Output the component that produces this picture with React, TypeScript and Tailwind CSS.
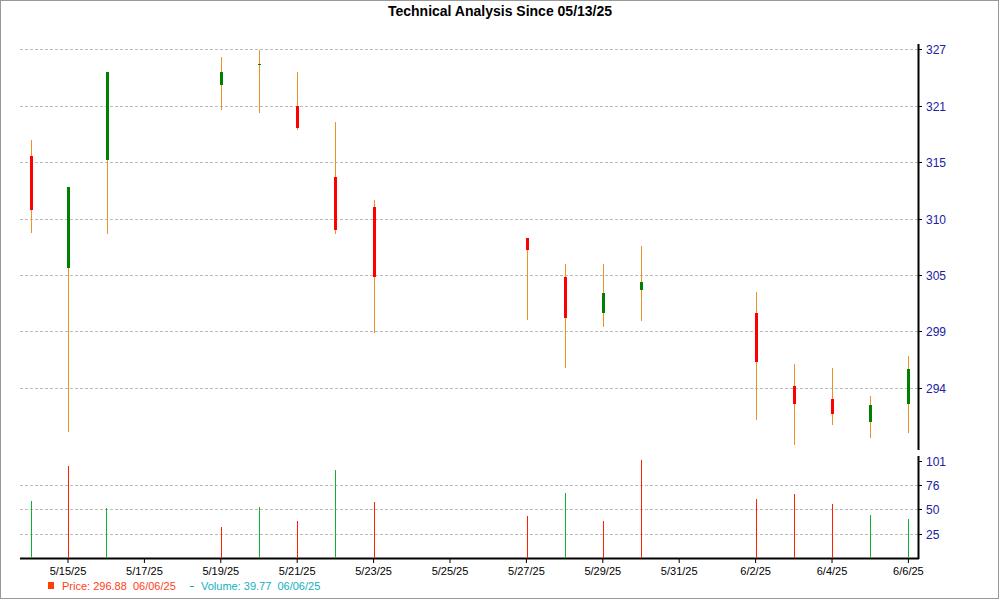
import React from "react";

const candles: [number, number, number, number, number, "g" | "r"][] = [
  [31, 140, 233, 156, 210, "r"],
  [68, 187, 432, 187, 268, "g"],
  [107, 72, 234, 72, 160, "g"],
  [221, 57, 110, 72, 85, "g"],
  [259, 50, 113, 64, 65, "g"],
  [297, 72, 130, 106, 128, "r"],
  [335, 122, 234, 177, 230, "r"],
  [374, 200, 333, 207, 277, "r"],
  [527, 238, 320, 238, 250, "r"],
  [565, 264, 368, 277, 318, "r"],
  [603, 264, 327, 293, 313, "g"],
  [641, 246, 321, 282, 290, "g"],
  [756, 292, 420, 313, 362, "r"],
  [794, 364, 445, 386, 404, "r"],
  [832, 368, 425, 399, 414, "r"],
  [870, 396, 438, 405, 422, "g"],
  [908, 356, 433, 369, 404, "g"],
];
const vols: [number, number, "g" | "r"][] = [
  [31, 501, "g"], [68, 466, "r"], [106, 508, "g"], [221, 527, "r"], [259, 507, "g"],
  [297, 521, "r"], [335, 470, "g"], [374, 502, "r"], [527, 516, "r"], [565, 493, "g"],
  [603, 521, "r"], [641, 460, "r"], [756, 499, "r"], [794, 494, "r"], [832, 504, "r"],
  [870, 515, "g"], [908, 519, "g"],
];
const priceTicks: [string, number][] = [["327", 49], ["321", 106], ["315", 162], ["310", 219], ["305", 275], ["299", 331], ["294", 388]];
const volTicks: [string, number][] = [["101", 461], ["76", 485], ["50", 509], ["25", 534]];
const dates = ["5/15/25", "5/17/25", "5/19/25", "5/21/25", "5/23/25", "5/25/25", "5/27/25", "5/29/25", "5/31/25", "6/2/25", "6/4/25", "6/6/25"];
const G = "#008000", R = "#ff0000", W = "#f0902a";

export default function App() {
  return (
    <div className="w-[1000px] h-[600px] bg-white relative overflow-hidden" style={{ fontFamily: '"Liberation Sans", Arial, sans-serif' }}>
      <div className="text-center font-bold text-[14px] text-black pt-[1px]">Technical Analysis Since 05/13/25</div>
      <svg width="1000" height="600" className="absolute left-0 top-0" fontFamily='"Liberation Sans", Arial, sans-serif'>
        <rect x="0.5" y="0.5" width="998" height="598" fill="none" stroke="#999" />
        {priceTicks.map(([t, y]) => (
          <g key={t}>
            <line x1="20" x2="918" y1={y + 0.5} y2={y + 0.5} stroke="#bbb" strokeDasharray="3,2" />
            <line x1="918" x2="922" y1={y + 0.5} y2={y + 0.5} stroke="#000" />
            <text x="926" y={y + 5} fontSize="12" fill="#2020a0">{t}</text>
          </g>
        ))}
        {volTicks.map(([t, y]) => (
          <g key={t}>
            {t !== "101" && <line x1="20" x2="918" y1={y + 0.5} y2={y + 0.5} stroke="#bbb" strokeDasharray="3,2" />}
            <line x1="918" x2="922" y1={y + 0.5} y2={y + 0.5} stroke="#000" />
            <text x="926" y={y + 5} fontSize="12" fill="#2020a0">{t}</text>
          </g>
        ))}
        <line x1="918.5" x2="918.5" y1="44" y2="450" stroke="#000" strokeWidth="2" />
        <line x1="918.5" x2="918.5" y1="456" y2="559" stroke="#000" strokeWidth="2" />
        <line x1="20" x2="919" y1="558.5" y2="558.5" stroke="#000" strokeWidth="2" />
        {candles.map(([x, h, l, o, c, col], i) => (
          <g key={i}>
            <rect x={x} y={h} width="1" height={l - h} fill={W} />
            <rect x={x - 1} y={o} width="3" height={Math.max(1, c - o)} fill={col === "g" ? G : R} />
          </g>
        ))}
        {vols.map(([x, y, col], i) => (
          <rect key={i} x={x} y={y} width="1" height={558 - y} fill={col === "g" ? "#10b030" : "#ff2000"} />
        ))}
        {dates.map((d, i) => {
          const x = 68 + i * 76.4;
          return (
            <g key={d}>
              <line x1={x} x2={x} y1="558" y2="563" stroke="#000" />
              <text x={x} y="575" fontSize="11" textAnchor="middle" fill="#000">{d}</text>
            </g>
          );
        })}
        <rect x="48" y="582" width="6" height="7" fill="#ff4000" />
        <text x="62" y="590" fontSize="11" fill="#ff4020" style={{ whiteSpace: "pre" }}>{"Price: 296.88  06/06/25"}</text>
        <line x1="190" x2="194" y1="586.5" y2="586.5" stroke="#10b0b0" />
        <text x="201" y="590" fontSize="11" fill="#10b0c0" style={{ whiteSpace: "pre" }}>{"Volume: 39.77  06/06/25"}</text>
      </svg>
    </div>
  );
}
